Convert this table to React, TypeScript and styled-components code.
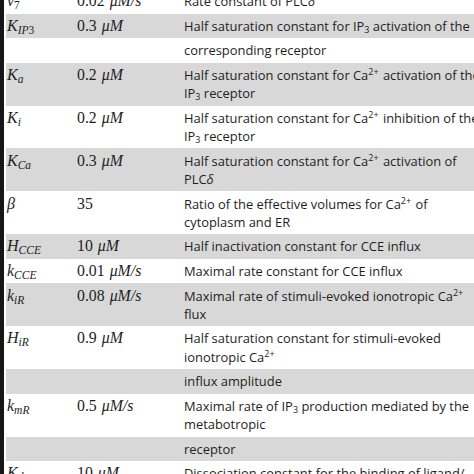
import React from "react";
import styled, { createGlobalStyle } from "styled-components";

const Global = createGlobalStyle`
  html, body { margin: 0; padding: 0; background: #ffffff; overflow: hidden; }
  body { width: 474px; height: 474px; }
`;

const Frame = styled.div`
  width: 474px;
  height: 474px;
  overflow: hidden;
  box-sizing: border-box;
  border-left: 4px solid #161616;
  padding-left: 2px;
  background: #fff;
`;

const Table = styled.table`
  border-collapse: collapse;
  margin-top: -11px;
  width: 490px;
  table-layout: fixed;
  color: #1e1e1e;
`;

const Row = styled.tr<{ $shade: boolean }>`
  background: ${(p) => (p.$shade ? "#d8d8d8" : "#ffffff")};
`;

const SymCell = styled.td`
  width: 70px;
  padding: 3.2px 0 3.1px 1px;
  vertical-align: top;
  font-family: "Liberation Serif", "Times New Roman", serif;
  font-style: italic;
  font-size: 16px;
  line-height: 18.3px;
  sub { font-size: 11.5px; vertical-align: -3px; line-height: 0; }
`;

const ValCell = styled.td`
  width: 107px;
  padding: 3.2px 0 3.1px 0;
  vertical-align: top;
  font-family: "Liberation Serif", "Times New Roman", serif;
  font-size: 15.8px;
  line-height: 18.3px;
`;

const Unit = styled.i`
  font-style: italic;
  margin-left: 5px;
`;

const DescCell = styled.td`
  padding: 3.2px 13px 3.1px 0;
  vertical-align: top;
  font-family: "Open Sans", "Noto Sans", sans-serif;
  font-size: 12.9px;
  line-height: 18.3px;
  text-align: left;
  sub { font-size: 9px; vertical-align: -2px; line-height: 0; }
  sup { font-size: 9px; vertical-align: 5px; line-height: 0; margin-right: 1px; }
`;

const Up = styled.span`
  font-style: normal;
`;

const Ca = () => (
  <>
    Ca<sup>2+</sup>
  </>
);
const IP3 = () => (
  <>
    IP<sub>3</sub>
  </>
);

type R = { sym: React.ReactNode; val: React.ReactNode; desc: React.ReactNode };

const rows: R[] = [
  {
    sym: (
      <>
        v<sub><Up>7</Up></sub>
      </>
    ),
    val: (
      <>
        0.02<Unit>μM/s</Unit>
      </>
    ),
    desc: (
      <>
        Rate constant of PLC<i>δ</i>
      </>
    ),
  },
  {
    sym: (
      <>
        K<sub>IP<Up>3</Up></sub>
      </>
    ),
    val: (
      <>
        0.3<Unit>μM</Unit>
      </>
    ),
    desc: (
      <>
        Half saturation constant for <IP3 /> activation of the
      </>
    ),
  },
  { sym: "", val: "", desc: "corresponding receptor" },
  {
    sym: (
      <>
        K<sub>a</sub>
      </>
    ),
    val: (
      <>
        0.2<Unit>μM</Unit>
      </>
    ),
    desc: (
      <>
        Half saturation constant for <Ca /> activation of the <IP3 /> receptor
      </>
    ),
  },
  {
    sym: (
      <>
        K<sub>i</sub>
      </>
    ),
    val: (
      <>
        0.2<Unit>μM</Unit>
      </>
    ),
    desc: (
      <>
        Half saturation constant for <Ca /> inhibition of the <IP3 /> receptor
      </>
    ),
  },
  {
    sym: (
      <>
        K<sub>Ca</sub>
      </>
    ),
    val: (
      <>
        0.3<Unit>μM</Unit>
      </>
    ),
    desc: (
      <>
        Half saturation constant for <Ca /> activation of PLC<i>δ</i>
      </>
    ),
  },
  {
    sym: "β",
    val: "35",
    desc: (
      <>
        Ratio of the effective volumes for <Ca /> of cytoplasm and ER
      </>
    ),
  },
  {
    sym: (
      <>
        H<sub>CCE</sub>
      </>
    ),
    val: (
      <>
        10<Unit>μM</Unit>
      </>
    ),
    desc: "Half inactivation constant for CCE influx",
  },
  {
    sym: (
      <>
        k<sub>CCE</sub>
      </>
    ),
    val: (
      <>
        0.01<Unit>μM/s</Unit>
      </>
    ),
    desc: "Maximal rate constant for CCE influx",
  },
  {
    sym: (
      <>
        k<sub>iR</sub>
      </>
    ),
    val: (
      <>
        0.08<Unit>μM/s</Unit>
      </>
    ),
    desc: (
      <>
        Maximal rate of stimuli-evoked ionotropic <Ca /> flux
      </>
    ),
  },
  {
    sym: (
      <>
        H<sub>iR</sub>
      </>
    ),
    val: (
      <>
        0.9<Unit>μM</Unit>
      </>
    ),
    desc: (
      <>
        Half saturation constant for stimuli-evoked
        <br />
        ionotropic <Ca />
      </>
    ),
  },
  { sym: "", val: "", desc: "influx amplitude" },
  {
    sym: (
      <>
        k<sub>mR</sub>
      </>
    ),
    val: (
      <>
        0.5<Unit>μM/s</Unit>
      </>
    ),
    desc: (
      <>
        Maximal rate of <IP3 /> production mediated by the metabotropic
      </>
    ),
  },
  { sym: "", val: "", desc: "receptor" },
  {
    sym: (
      <>
        K<sub>d</sub>
      </>
    ),
    val: (
      <>
        10<Unit>μM</Unit>
      </>
    ),
    desc: "Dissociation constant for the binding of ligand/ receptor",
  },
];

export default function App() {
  return (
    <>
      <Global />
      <Frame>
        <Table>
          <tbody>
            {rows.map((r, i) => (
              <Row key={i} $shade={i % 2 === 1}>
                <SymCell>{r.sym}</SymCell>
                <ValCell>{r.val}</ValCell>
                <DescCell>{r.desc}</DescCell>
              </Row>
            ))}
          </tbody>
        </Table>
      </Frame>
    </>
  );
}
